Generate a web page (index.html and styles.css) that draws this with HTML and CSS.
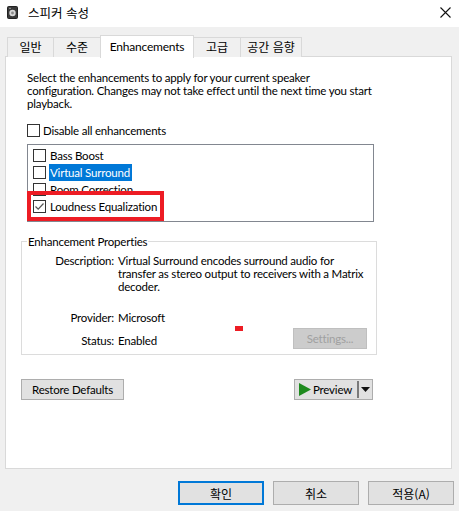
FILE: index.html
```html
<!DOCTYPE html>
<html lang="ko">
<head>
  <meta charset="UTF-8">
  <title>스피커 속성</title>
  <link rel="stylesheet" href="styles.css">
</head>
<body>
<div class="window">
  <div class="titlebar">
    <svg class="app-icon" width="11" height="13" viewBox="0 0 11 13">
      <rect x="0.5" y="0.5" width="10" height="12" rx="1" fill="#3a3a3a" stroke="#222"/>
      <circle cx="5.5" cy="7" r="3.2" fill="#d8d8d8"/>
      <circle cx="5.5" cy="7" r="1.4" fill="#8a8a8a"/>
      <rect x="2" y="1.8" width="2" height="1" fill="#9a9a9a"/>
    </svg>
    <span class="title">스피커 속성</span>
    <svg class="close-icon" width="11" height="11" viewBox="0 0 11 11">
      <path d="M0.5 0.5 L10.5 10.5 M10.5 0.5 L0.5 10.5" stroke="#111" stroke-width="1.1"/>
    </svg>
  </div>

  <div class="dialog">
    <div class="tabs">
      <div class="tab">일반</div>
      <div class="tab">수준</div>
      <div class="tab active">Enhancements</div>
      <div class="tab">고급</div>
      <div class="tab">공간 음향</div>
    </div>

    <div class="panel">
      <p class="intro">Select the enhancements to apply for your current speaker<br>configuration. Changes may not take effect until the next time you start<br>playback.</p>

      <label class="check-row disable-all">
        <span class="box"></span>Disable all enhancements
      </label>

      <div class="listbox">
        <div class="item"><span class="box"></span><span class="item-text">Bass Boost</span></div>
        <div class="item"><span class="box"></span><span class="item-text selected">Virtual Surround</span></div>
        <div class="item"><span class="box"></span><span class="item-text">Room Correction</span></div>
        <div class="item">
          <span class="box checked">
            <svg width="11" height="11" viewBox="0 0 11 11"><path d="M1.5 5.5 L4.2 8.2 L9.5 2.5" fill="none" stroke="#555" stroke-width="1.2"/></svg>
          </span><span class="item-text">Loudness Equalization</span>
        </div>
      </div>

      <fieldset class="props">
        <legend>Enhancement Properties</legend>
        <div class="prop-grid">
          <span class="prop-label">Description:</span>
          <span class="prop-value">Virtual Surround encodes surround audio for<br>transfer as stereo output to receivers with a Matrix<br>decoder.</span>
        </div>
        <div class="prop-grid provider">
          <span class="prop-label">Provider:</span>
          <span class="prop-value">Microsoft</span>
        </div>
        <div class="prop-grid status">
          <span class="prop-label">Status:</span>
          <span class="prop-value">Enabled</span>
          <button class="btn settings" disabled>Settings...</button>
        </div>
      </fieldset>

      <div class="panel-buttons">
        <button class="btn restore">Restore Defaults</button>
        <button class="btn preview">
          <svg class="play" width="12" height="13" viewBox="0 0 12 13"><path d="M0 0 L12 6.5 L0 13 Z" fill="#1e8a1e"/></svg>
          <span>Preview</span>
          <span class="split"></span>
          <svg width="9" height="5" viewBox="0 0 9 5"><path d="M0 0 L9 0 L4.5 5 Z" fill="#111"/></svg>
        </button>
      </div>

      <div class="mark-box"></div>
      <div class="mark-dot"></div>
    </div>

    <div class="dialog-buttons">
      <button class="btn big default">확인</button>
      <button class="btn big">취소</button>
      <button class="btn big">적용(A)</button>
    </div>
  </div>
</div>
</body>
</html>
```

FILE: styles.css
```css
html, body {
  margin: 0;
  padding: 0;
}
body {
  font-family: Lato, "Noto Sans CJK KR", sans-serif;
  font-size: 11.5px;
  letter-spacing: -0.2px;
  color: #000;
  background-color: #f0f0f0;
}
.window {
  width: 459px;
  height: 511px;
  display: flex;
  flex-direction: column;
  background-color: #f0f0f0;
}
.titlebar {
  height: 27px;
  background-color: #fff;
  display: flex;
  align-items: center;
  padding: 0 8px 2px 7px;
  box-sizing: border-box;
}
.app-icon {
  margin-right: 10px;
}
.title {
  font-family: "Noto Sans CJK KR", sans-serif;
  font-size: 12.5px;
  letter-spacing: 0;
  flex: 1;
}
.dialog {
  flex: 1;
  display: flex;
  flex-direction: column;
  padding: 8px 7px 0 5px;
}
.tabs {
  display: flex;
  align-items: flex-end;
  height: 22px;
  padding-left: 2px;
  position: relative;
  z-index: 1;
  margin-bottom: -1px;
}
.tab {
  height: 20px;
  box-sizing: border-box;
  border: 1px solid #d9d9d9;
  border-bottom: none;
  border-left: none;
  background-color: #f0f0f0;
  font-family: "Noto Sans CJK KR", sans-serif;
  font-size: 12px;
  letter-spacing: 0;
  line-height: 18px;
  padding: 0 6px;
  width: 47px;
  text-align: center;
}
.tab:first-child {
  border-left: 1px solid #d9d9d9;
}
.tab:nth-child(5) {
  width: 61px;
}
.tab.active {
  font-family: Lato, sans-serif;
  font-size: 12px;
  letter-spacing: -0.2px;
  width: 94px;
  height: 23px;
  margin-bottom: -1px;
  background-color: #fff;
  border-left: 1px solid #d9d9d9;
  margin-left: -1px;
  line-height: 21px;
}
.panel {
  height: 413px;
  box-sizing: border-box;
  background-color: #fff;
  border: 1px solid #d9d9d9;
  position: relative;
  padding: 14px 0 0 21px;
}
.intro {
  margin: 0;
  line-height: 13px;
  white-space: nowrap;
}
.check-row {
  display: flex;
  align-items: center;
  margin-top: 14px;
  height: 13px;
}
.box {
  width: 13px;
  height: 13px;
  box-sizing: border-box;
  border: 1px solid #333;
  background-color: #fff;
  margin-right: 3px;
  flex-shrink: 0;
  display: flex;
  align-items: center;
  justify-content: center;
}
.listbox {
  margin-top: 7px;
  width: 347px;
  height: 78px;
  box-sizing: border-box;
  border: 1px solid #828790;
  padding: 2px 0 0 5px;
}
.item {
  display: flex;
  align-items: center;
  height: 17px;
}
.item-text {
  padding: 0 2px 0 1px;
  line-height: 17px;
}
.item-text.selected {
  background-color: #0078d7;
  color: #fff;
}
.props {
  margin: 13px 0 0 -6px;
  width: 356px;
  min-width: 0;
  height: 120px;
  box-sizing: border-box;
  border: 1px solid #dcdcdc;
  padding: 0;
}
.props legend {
  padding: 0 1px;
  margin-left: 5px;
  line-height: 13px;
}
.prop-grid {
  display: grid;
  grid-template-columns: 92px auto 1fr;
  column-gap: 4px;
  align-items: start;
  line-height: 13px;
}
.prop-grid:first-of-type {
  margin-top: 6px;
}
.prop-label {
  text-align: right;
}
.prop-value {
  white-space: nowrap;
}
.provider {
  margin-top: 18px;
}
.status {
  margin-top: 4px;
}
.status .prop-label,
.status .prop-value {
  padding-top: 6px;
}
.btn {
  font-family: Lato, sans-serif;
  font-size: 11.5px;
  letter-spacing: -0.2px;
  background-color: #e1e1e1;
  border: 1px solid #adadad;
  color: #000;
  padding: 0;
  height: 21px;
  box-sizing: border-box;
  cursor: pointer;
}
.btn.settings {
  justify-self: end;
  margin-right: 9px;
  width: 74px;
  color: #a0a0a0;
  background-color: #cccccc;
  border-color: #bfbfbf;
}
.panel-buttons {
  display: flex;
  justify-content: space-between;
  width: 352px;
  margin: 24px 0 0 -6px;
}
.restore {
  width: 103px;
}
.preview {
  width: 79px;
  display: flex;
  align-items: center;
  padding: 0 0 0 4px;
}
.preview .play {
  margin-right: 2px;
}
.preview .split {
  width: 2px;
  height: 17px;
  background-color: #7a7a7a;
  margin: 0 2px 0 auto;
}
.preview svg:last-child {
  margin-right: 2px;
}
.mark-box {
  position: absolute;
  left: 21px;
  top: 134px;
  width: 137px;
  height: 30px;
  box-sizing: border-box;
  border: 4px solid #ed1c24;
}
.mark-dot {
  position: absolute;
  left: 229px;
  top: 269px;
  width: 8px;
  height: 5px;
  background-color: #ed1c24;
}
.dialog-buttons {
  display: flex;
  justify-content: flex-end;
  gap: 9px;
  padding-top: 12px;
  margin-right: -2px;
}
.btn.big {
  font-family: "Noto Sans CJK KR", sans-serif;
  font-size: 12px;
  letter-spacing: 0;
  width: 86px;
  height: 24px;
}
.btn.default {
  border: 2px solid #0078d7;
}
```
